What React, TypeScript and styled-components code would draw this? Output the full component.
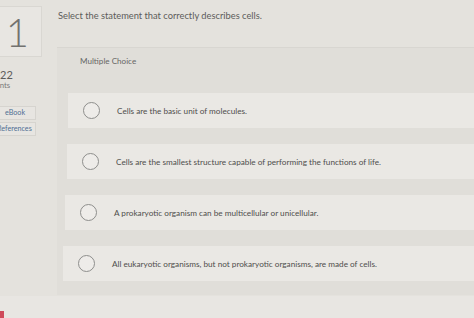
import React from "react";
import styled, { createGlobalStyle } from "styled-components";

const Global = createGlobalStyle`
  html, body { margin: 0; padding: 0; }
  body {
    width: 474px; height: 318px; overflow: hidden;
    background: #e4e2dd;
    font-family: Lato, "Open Sans", "Liberation Sans", sans-serif;
    color: #5a5a58;
  }
`;

const Page = styled.div`
  display: flex;
  width: 474px;
  height: 318px;
  overflow: hidden;
  position: relative;
`;

const Sidebar = styled.div`
  flex: 0 0 77px;
  min-width: 0;
  margin-left: -20px;
  display: flex;
  flex-direction: column;
  align-items: flex-end;
  padding-top: 6px;
  padding-right: 15px;
  box-sizing: border-box;
`;

const NumberBox = styled.div`
  width: 56px;
  height: 51px;
  box-sizing: border-box;
  background: #e8e6e2;
  border: 1px solid #d9d7d2;
  display: flex;
  align-items: center;
  justify-content: flex-end;
  padding-right: 12px;
  font-size: 40px;
  font-weight: 300;
  color: #727270;
  line-height: 1;
`;

const Points = styled.div`
  align-self: flex-start;
  margin-top: 12px;
  padding-left: 20px;
  line-height: 1.1;
`;

const PointsValue = styled.div`
  font-size: 11px;
  color: #5c5c5a;
`;

const PointsLabel = styled.div`
  font-size: 7.8px;
  color: #7a7a78;
  margin-left: -11px;
`;

const SideButtons = styled.div`
  align-self: flex-start;
  margin-top: 16px;
  display: flex;
  flex-direction: column;
  gap: 2px;
  width: 56px;
`;

const SideButton = styled.div<{ $indent: number }>`
  height: 14px;
  box-sizing: border-box;
  border: 1px solid #d6d4cf;
  background: #e7e5e1;
  font-size: 7.2px;
  color: #4f6f94;
  display: flex;
  align-items: center;
  padding-left: ${(p) => p.$indent}px;
  white-space: nowrap;
`;

const Main = styled.div`
  flex: 1;
  min-width: 0;
  display: flex;
  flex-direction: column;
  padding-top: 10px;
`;

const Question = styled.div`
  font-size: 9.3px;
  color: #5c5c5a;
  height: 37px;
  padding-left: 1px;
`;

const Panel = styled.div`
  background: #e0ded9;
  border-top: 1px solid #d8d6d1;
  padding: 8px 0 14px 11px;
  display: flex;
  flex-direction: column;
  height: 248px;
  box-sizing: border-box;
`;

const Label = styled.div`
  font-size: 8.1px;
  color: #666664;
  padding-left: 12px;
  height: 37px;
`;

const Options = styled.div`
  display: flex;
  flex-direction: column;
  gap: 16px;
`;

const Option = styled.div<{ $shift: number }>`
  height: 35px;
  margin-left: ${(p) => p.$shift}px;
  background: #eae8e4;
  display: flex;
  align-items: center;
  padding-left: 15px;
`;

const Radio = styled.div`
  width: 15px;
  height: 15px;
  border-radius: 50%;
  border: 1px solid #8e8e8c;
  background: #eeece9;
  flex: 0 0 auto;
`;

const OptionText = styled.div`
  margin-left: 17px;
  font-size: 8.2px;
  color: #4e4e4c;
  white-space: nowrap;
`;

const Footer = styled.div`
  position: absolute;
  left: 0;
  right: 0;
  bottom: 0;
  height: 22px;
  background: #e8e6e2;
`;

const RedMark = styled.div`
  position: absolute;
  left: 0;
  bottom: 0;
  width: 4px;
  height: 7px;
  background: #cf4a5a;
`;

const options = [
  { text: "Cells are the basic unit of molecules.", shift: 0 },
  { text: "Cells are the smallest structure capable of performing the functions of life.", shift: -1 },
  { text: "A prokaryotic organism can be multicellular or unicellular.", shift: -3 },
  { text: "All eukaryotic organisms, but not prokaryotic organisms, are made of cells.", shift: -5 },
];

export default function App() {
  return (
    <>
      <Global />
      <Page>
        <Footer />
        <Sidebar>
          <NumberBox>1</NumberBox>
          <Points>
            <PointsValue>22</PointsValue>
            <PointsLabel>points</PointsLabel>
          </Points>
          <SideButtons>
            <SideButton $indent={24}>eBook</SideButton>
            <SideButton $indent={16}>References</SideButton>
          </SideButtons>
        </Sidebar>
        <Main>
          <Question>Select the statement that correctly describes cells.</Question>
          <Panel>
            <Label>Multiple Choice</Label>
            <Options>
              {options.map((o) => (
                <Option key={o.text} $shift={o.shift}>
                  <Radio />
                  <OptionText>{o.text}</OptionText>
                </Option>
              ))}
            </Options>
          </Panel>
        </Main>
        <RedMark />
      </Page>
    </>
  );
}
